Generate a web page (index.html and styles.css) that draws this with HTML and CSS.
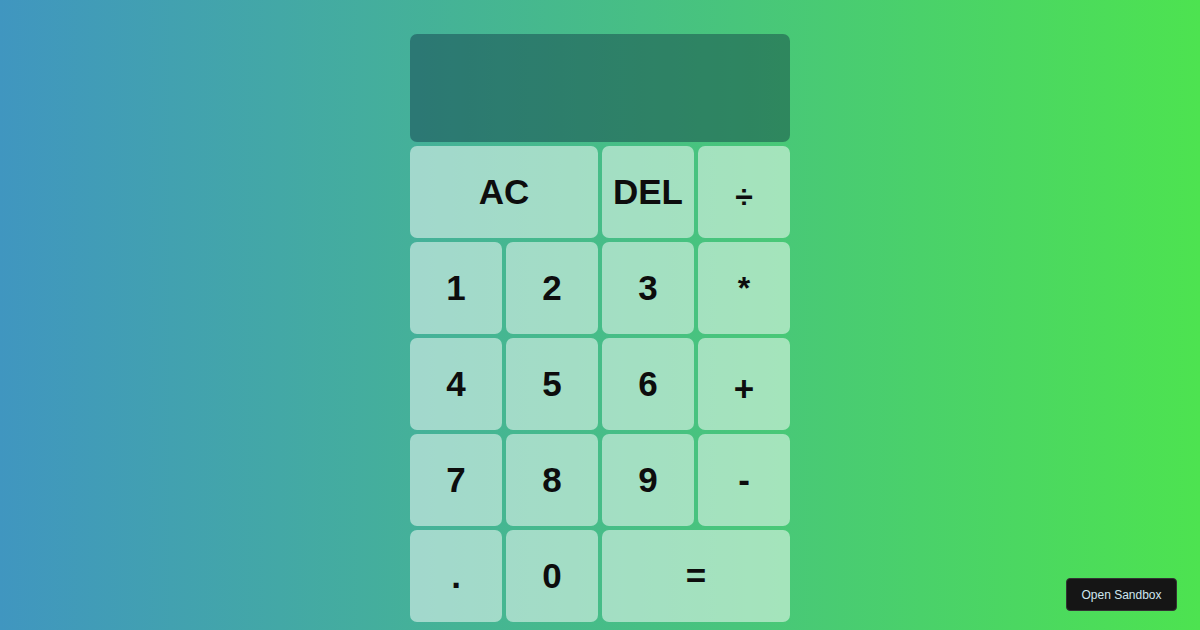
FILE: index.html
```html
<!DOCTYPE html>
<html>
<head>
<meta charset="utf-8">
<link rel="stylesheet" href="styles.css">
</head>
<body>
<div class="page">
  <div class="calculator">
    <div class="output"></div>
    <button class="btn span-two">AC</button>
    <button class="btn">DEL</button>
    <button class="btn low div">÷</button>
    <button class="btn">1</button>
    <button class="btn">2</button>
    <button class="btn">3</button>
    <button class="btn star">*</button>
    <button class="btn">4</button>
    <button class="btn">5</button>
    <button class="btn">6</button>
    <button class="btn low">+</button>
    <button class="btn">7</button>
    <button class="btn">8</button>
    <button class="btn">9</button>
    <button class="btn">-</button>
    <button class="btn">.</button>
    <button class="btn">0</button>
    <button class="btn span-two">=</button>
  </div>
</div>
<a class="sandbox">Open Sandbox</a>
</body>
</html>
```
FILE: styles.css
```css
* { box-sizing: border-box; }
html, body { margin: 0; padding: 0; }
body {
  width: 1200px;
  height: 630px;
  overflow: hidden;
  background: linear-gradient(to right, #4096c0, #4de350);
  font-family: "Liberation Sans", Arial, sans-serif;
}
.page {
  display: flex;
  justify-content: center;
  padding-top: 34px;
}
.calculator {
  display: grid;
  grid-template-columns: repeat(4, 92px);
  grid-template-rows: 108px repeat(5, 92px);
  gap: 4px;
}
.output {
  grid-column: 1 / -1;
  background: rgba(6, 28, 55, 0.38);
  border-radius: 7px;
}
.btn {
  border: none;
  border-radius: 7px;
  background: rgba(255, 255, 255, 0.5);
  font-family: "Liberation Sans", Arial, sans-serif;
  font-weight: bold;
  font-size: 35px;
  color: #0d0d0d;
  padding: 0;
  display: flex;
  align-items: center;
  justify-content: center;
}
.btn.low { padding-top: 9px; }
.btn.div { font-size: 32px; padding-top: 10px; }
.btn.star { font-size: 32px; }
.span-two { grid-column: span 2; }
.sandbox {
  position: fixed;
  left: 1066px;
  top: 578px;
  width: 111px;
  height: 33px;
  background: #151515;
  border: 1px solid #333;
  border-radius: 4px;
  color: #cfe6ef;
  font-size: 12px;
  display: flex;
  align-items: center;
  justify-content: center;
}
```
